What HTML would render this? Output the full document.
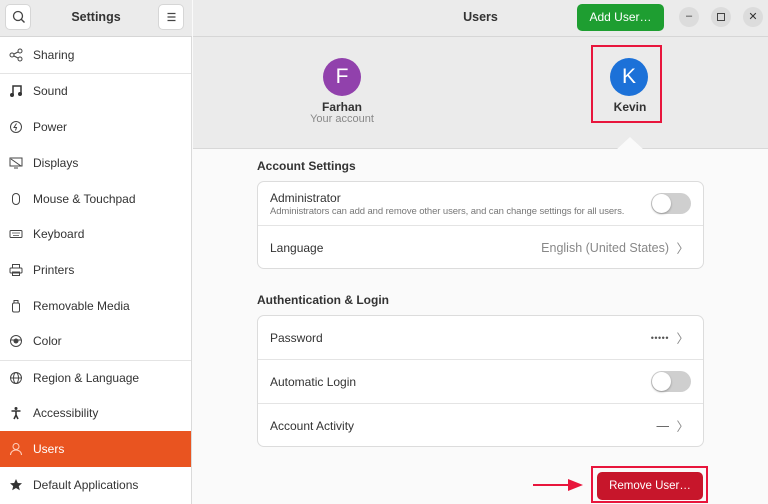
<!DOCTYPE html>
<html><head><style>
*{box-sizing:border-box;margin:0;padding:0}
body{width:768px;height:504px;overflow:hidden;font-family:"Liberation Sans",sans-serif;font-size:12px;color:#333;background:#fafafa;position:relative}
.abs{position:absolute}
.side{left:0;top:0;width:192px;height:504px;background:#fff;border-right:1px solid #dadada}
.hdr{left:0;top:0;width:192px;height:37px;background:#ebebeb;border-bottom:1px solid #d6d6d6}
.btn{width:26px;height:26px;border:1px solid #d6d6d6;border-radius:5px;background:#fff;top:4px}
.item{left:0;width:191px;height:36px;display:flex;align-items:center;padding-left:9px}
.item svg{width:14px;height:14px;margin-right:10px;flex:none}
.sep{left:0;width:191px;height:1px;background:#e4e4e4}
.main{left:193px;top:0;width:575px;height:149px;background:#ebebeb;border-bottom:1px solid #d8d8d8}
.av{width:38px;height:38px;border-radius:50%;color:#fff;font-size:21px;display:flex;align-items:center;justify-content:center}
.card{left:257px;width:447px;background:#fff;border:1px solid #dcdcdc;border-radius:7px}
.row{position:absolute;left:0;width:100%;display:flex;align-items:center;padding:0 12px}
.tog{width:40px;height:21px;border-radius:11px;background:#cfcfcf;position:absolute;right:12px}
.tog:after{content:"";position:absolute;left:1px;top:1px;width:19px;height:19px;border-radius:50%;background:#fff;box-shadow:0 1px 2px rgba(0,0,0,.3)}
.chev{position:absolute;right:14px;color:#888;font-size:12.5px}
.lbl{font-weight:bold;font-size:12px}
</style></head><body>
<div class="abs side"></div>
<div class="abs hdr"></div>
<div class="abs btn" style="left:5px"><svg width="26" height="24" viewBox="0 0 26 24"><circle cx="12" cy="11" r="4.5" fill="none" stroke="#444" stroke-width="1.3"/><path d="M15 14l3.5 3.5" stroke="#444" stroke-width="1.4"/></svg></div>
<div class="abs" style="left:0;width:192px;top:10px;text-align:center;font-weight:bold;font-size:12.5px">Settings</div>
<div class="abs btn" style="left:158px"><svg width="26" height="24" viewBox="0 0 26 24"><path d="M8.5 8.5h8M8.5 12h8M8.5 15.5h8" stroke="#444" stroke-width="1.2"/></svg></div>

<div class="abs item" style="top:37px"><svg viewBox="0 0 14 14"><circle cx="3" cy="7" r="2" fill="none" stroke="#444"/><circle cx="11" cy="3" r="2" fill="none" stroke="#444"/><circle cx="11" cy="11" r="2" fill="none" stroke="#444"/><path d="M5 6l4-2M5 8l4 2" stroke="#444"/></svg>Sharing</div>
<div class="abs sep" style="top:73px"></div>
<div class="abs item" style="top:73px"><svg viewBox="0 0 14 14"><path d="M4 11V2h8v8" stroke="#333" stroke-width="1.5" fill="none"/><circle cx="3" cy="11" r="2" fill="#333"/><circle cx="11" cy="10" r="2" fill="#333"/></svg>Sound</div>
<div class="abs item" style="top:109px"><svg viewBox="0 0 14 14"><circle cx="7" cy="7" r="5.5" fill="none" stroke="#444"/><path d="M7.5 3.5L5 7.5h2.5L6.5 10.5" stroke="#444" fill="none"/></svg>Power</div>
<div class="abs item" style="top:145px"><svg viewBox="0 0 14 14"><rect x="1" y="2" width="12" height="8" fill="none" stroke="#444"/><path d="M5 12h4M2 3l10 7" stroke="#444"/></svg>Displays</div>
<div class="abs item" style="top:181px"><svg viewBox="0 0 14 14"><rect x="3.5" y="1.5" width="7" height="11" rx="3.5" fill="none" stroke="#444"/></svg>Mouse &amp; Touchpad</div>
<div class="abs item" style="top:216px"><svg viewBox="0 0 14 14"><rect x="1" y="3.5" width="12" height="7" rx="1" fill="none" stroke="#444"/><path d="M3 6h8M4 8.5h6" stroke="#777"/></svg>Keyboard</div>
<div class="abs item" style="top:252px"><svg viewBox="0 0 14 14"><rect x="1" y="5" width="12" height="5" rx="1" fill="none" stroke="#444"/><rect x="3.5" y="1.5" width="7" height="3.5" fill="none" stroke="#444"/><rect x="3.5" y="9" width="7" height="3.5" fill="none" stroke="#444"/></svg>Printers</div>
<div class="abs item" style="top:288px"><svg viewBox="0 0 14 14"><rect x="3.5" y="4" width="7" height="9" rx="1.5" fill="none" stroke="#444"/><rect x="5" y="1.5" width="4" height="2.5" fill="none" stroke="#444"/></svg>Removable Media</div>
<div class="abs item" style="top:323px"><svg viewBox="0 0 14 14"><circle cx="7" cy="7" r="5.5" fill="none" stroke="#444"/><circle cx="7" cy="7" r="2.5" fill="#444"/><path d="M2 6h10" stroke="#444"/></svg>Color</div>
<div class="abs sep" style="top:360px"></div>
<div class="abs item" style="top:360px"><svg viewBox="0 0 14 14"><circle cx="7" cy="7" r="5.5" fill="none" stroke="#444"/><ellipse cx="7" cy="7" rx="2.5" ry="5.5" fill="none" stroke="#444"/><path d="M1.5 7h11" stroke="#444"/></svg>Region &amp; Language</div>
<div class="abs item" style="top:395px"><svg viewBox="0 0 14 14"><circle cx="7" cy="2.5" r="1.5" fill="#333"/><path d="M2.5 5h9M7 5v4M5 13l2-4 2 4" stroke="#333" stroke-width="1.6" fill="none"/></svg>Accessibility</div>
<div class="abs item" style="top:431px;background:#e95420;color:#fff;height:36px"><svg viewBox="0 0 14 14"><circle cx="7" cy="4.5" r="3" fill="none" stroke="#ffd0bd"/><path d="M1.5 13c0-3 2.5-5 5.5-5s5.5 2 5.5 5" fill="none" stroke="#ffd0bd"/></svg>Users</div>
<div class="abs item" style="top:467px"><svg viewBox="0 0 14 14"><path d="M7 1l1.8 4 4.2.3-3.2 2.8 1 4.2L7 10 3.2 12.3l1-4.2L1 5.3 5.2 5z" fill="#333"/></svg>Default Applications</div>

<div class="abs main"></div>
<div class="abs" style="left:193px;top:36px;width:575px;height:1px;background:#d6d6d6"></div>
<div class="abs" style="left:193px;width:575px;top:10px;text-align:center;font-weight:bold;font-size:12.5px">Users</div>
<div class="abs" style="left:577px;top:4px;width:87px;height:27px;background:#1e9e31;border-radius:5px;color:#fff;text-align:center;line-height:27px;font-size:12px">Add User…</div>
<div class="abs" style="left:679px;top:7px;width:20px;height:20px;border-radius:50%;background:#dcdcdc;text-align:center;line-height:18px;font-size:11px">–</div>
<div class="abs" style="left:711px;top:7px;width:20px;height:20px;border-radius:50%;background:#dcdcdc"><div style="position:absolute;left:6px;top:6px;width:8px;height:8px;border:1.3px solid #444"></div></div>
<div class="abs" style="left:743px;top:7px;width:20px;height:20px;border-radius:50%;background:#dcdcdc;text-align:center;line-height:20px;font-size:11px">✕</div>

<div class="abs av" style="left:323px;top:58px;background:#9141ac">F</div>
<div class="abs" style="left:292px;width:100px;top:100px;text-align:center;font-weight:bold;font-size:12px">Farhan</div>
<div class="abs" style="left:292px;width:100px;top:113px;text-align:center;color:#888;font-size:11px">Your account</div>
<div class="abs av" style="left:610px;top:58px;background:#1c71d8">K</div>
<div class="abs" style="left:580px;width:100px;top:100px;text-align:center;font-weight:bold;font-size:12px">Kevin</div>
<div class="abs" style="left:591px;top:45px;width:71px;height:78px;border:2px solid #e8153c"></div>
<div class="abs" style="left:616px;top:137px;width:0;height:0;border-left:14px solid transparent;border-right:14px solid transparent;border-bottom:13px solid #fafafa"></div>

<div class="abs lbl" style="left:257px;top:159px">Account Settings</div>
<div class="abs card" style="top:181px;height:88px">
<div class="row" style="top:0;height:44px;border-bottom:1px solid #e4e4e4;flex-direction:column;align-items:flex-start;justify-content:center"><div>Administrator</div><div style="font-size:9.5px;color:#777;margin-top:1px;letter-spacing:-0.1px;max-width:380px;white-space:nowrap">Administrators can add and remove other users, and can change settings for all users.</div><div class="tog" style="top:11px"></div></div>
<div class="row" style="top:44px;height:43px">Language<span class="chev" style="right:34px">English (United States)</span><span class="chev">〉</span></div>
</div>

<div class="abs lbl" style="left:257px;top:293px">Authentication &amp; Login</div>
<div class="abs card" style="top:315px;height:132px">
<div class="row" style="top:0;height:44px;border-bottom:1px solid #e4e4e4">Password<span class="chev" style="right:34px;letter-spacing:0.5px;font-size:9px;color:#555">•••••</span><span class="chev">〉</span></div>
<div class="row" style="top:44px;height:44px;border-bottom:1px solid #e4e4e4">Automatic Login<div class="tog" style="top:11px"></div></div>
<div class="row" style="top:88px;height:43px">Account Activity<span class="chev" style="right:34px;color:#555">—</span><span class="chev">〉</span></div>
</div>

<div class="abs" style="left:591px;top:466px;width:117px;height:37px;border:2px solid #e8153c"></div>
<div class="abs" style="left:597px;top:472px;width:106px;height:28px;background:#c7162b;border-radius:5px;color:#fff;text-align:center;line-height:28px;font-size:11.5px">Remove User…</div>
<svg class="abs" style="left:532px;top:478px" width="52" height="14"><path d="M1 7h38" stroke="#e8153c" stroke-width="2"/><path d="M36 1l15 6-15 6z" fill="#e8153c"/></svg>
</body></html>
